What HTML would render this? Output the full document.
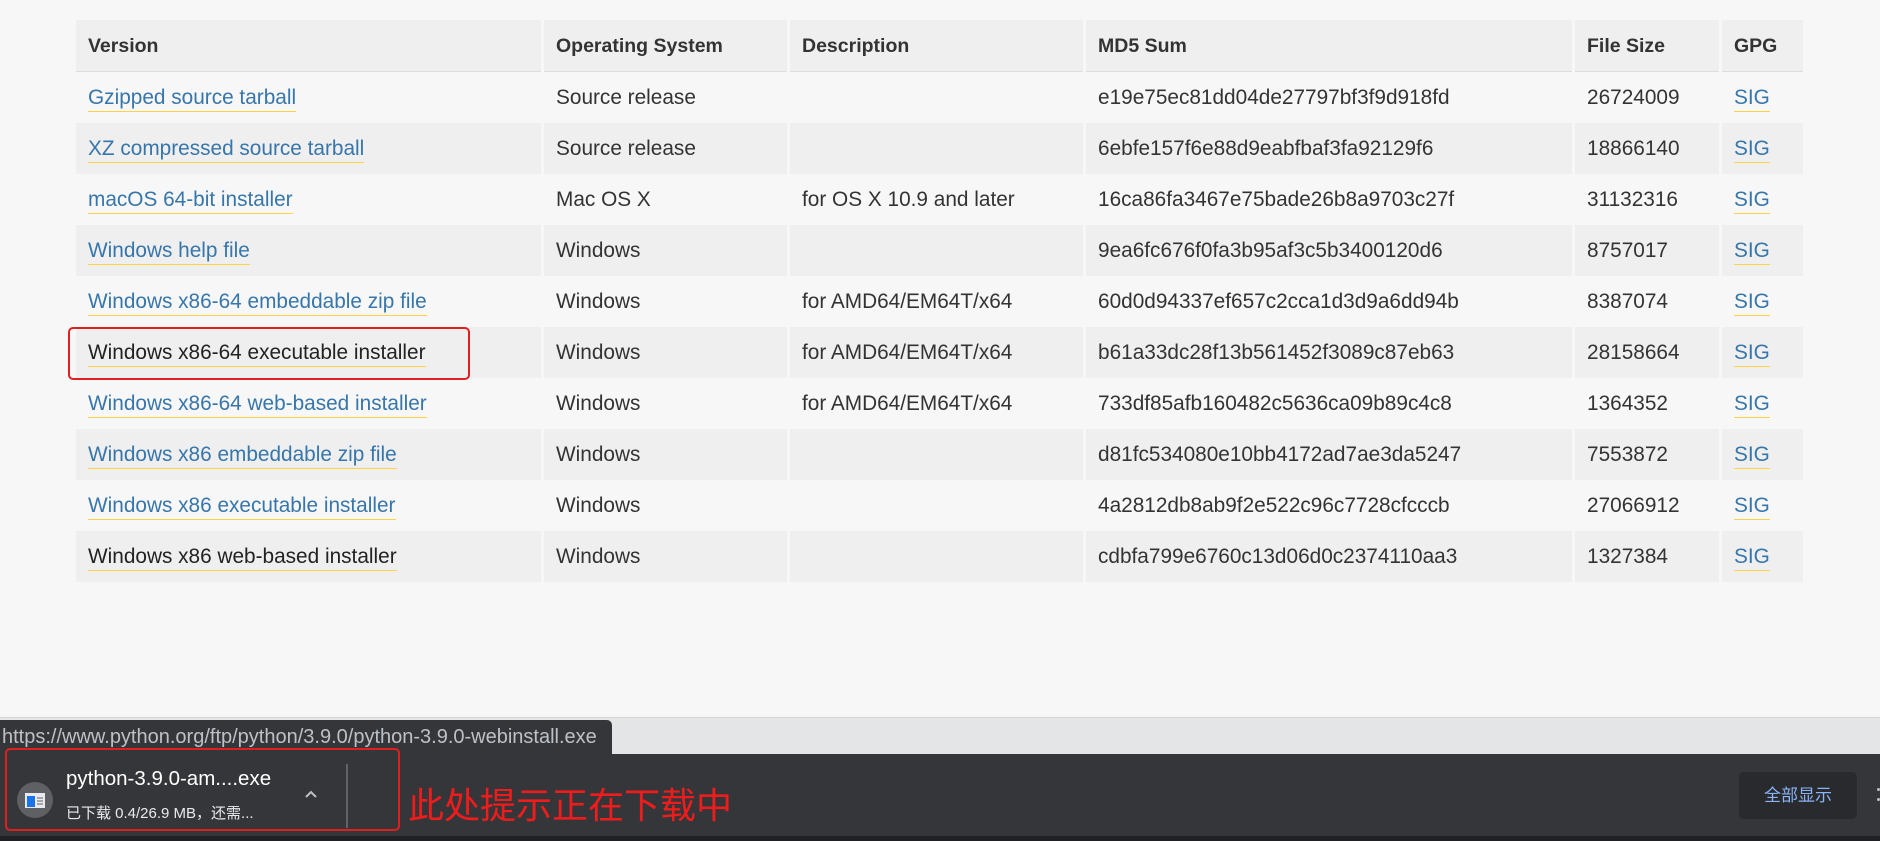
<!DOCTYPE html>
<html><head><meta charset="utf-8"><style>
html,body{margin:0;padding:0;width:1880px;height:841px;overflow:hidden;background:#f7f7f7;font-family:"Liberation Sans","Noto Sans CJK SC",sans-serif;}
.tbl{position:absolute;left:76px;top:20px;display:grid;grid-template-columns:465px 243px 293px 486px 144px 81px;column-gap:3px;}
.tbl div{height:51px;line-height:51px;padding-left:12px;font-size:20.8px;color:#333;white-space:nowrap;box-sizing:border-box;overflow:hidden;}
.tbl .h{height:52px;line-height:52px;font-weight:bold;color:#333;background:#efefef;border-bottom:1px solid #ddd;font-size:19.5px;}
.tbl .o{background:#f7f7f7}
.tbl .e{background:#efefef}
a{color:#3776ab;text-decoration:none;border-bottom:1px solid #ffd343;padding-bottom:2px;}
a.k{color:#222}
#hl{position:absolute;left:68px;top:327px;width:402px;height:53px;border:2px solid #e02020;border-radius:5px;box-sizing:border-box;}
#gray{position:absolute;left:0;top:717px;width:1880px;height:37px;background:#e4e5e7;border-top:1px solid #d5d5d5;}
#tab{position:absolute;left:0;top:720px;width:612px;height:34px;background:#35363a;border-radius:0 5px 0 0;color:#bdc1c6;font-size:20px;line-height:34px;padding-left:2px;box-sizing:border-box;white-space:nowrap;}
#bar{position:absolute;left:0;top:754px;width:1880px;height:82px;background:#35363a;}
#strip{position:absolute;left:0;top:836px;width:1880px;height:5px;background:#202124;}
#box{position:absolute;left:5px;top:748px;width:395px;height:83px;border:2px solid #e02020;border-radius:5px;box-sizing:border-box;}
#ic{position:absolute;left:17px;top:782px;width:36px;height:36px;border-radius:50%;background:#5f6064;}
#fn{position:absolute;left:66px;top:767px;color:#fff;font-size:20.5px;}
#sub{position:absolute;left:66px;top:802px;color:#e8eaed;font-size:15px;}
#sep{position:absolute;left:346px;top:764px;width:2px;height:64px;background:#5f6368;}
#red{position:absolute;left:408px;top:781px;color:#f01c1c;font-size:36px;font-family:"Noto Sans CJK SC",sans-serif;line-height:45px;}
#btn{position:absolute;left:1739px;top:772px;width:118px;height:47px;background:#292a2d;border-radius:5px;color:#8ab4f8;font-size:17px;line-height:47px;text-align:center;}
</style></head><body>
<div class="tbl">
<div class="h">Version</div><div class="h">Operating System</div><div class="h">Description</div><div class="h">MD5 Sum</div><div class="h">File Size</div><div class="h">GPG</div>
<div class="o"><a>Gzipped source tarball</a></div><div class="o">Source release</div><div class="o"></div><div class="o">e19e75ec81dd04de27797bf3f9d918fd</div><div class="o">26724009</div><div class="o"><a>SIG</a></div>
<div class="e"><a>XZ compressed source tarball</a></div><div class="e">Source release</div><div class="e"></div><div class="e">6ebfe157f6e88d9eabfbaf3fa92129f6</div><div class="e">18866140</div><div class="e"><a>SIG</a></div>
<div class="o"><a>macOS 64-bit installer</a></div><div class="o">Mac OS X</div><div class="o">for OS X 10.9 and later</div><div class="o">16ca86fa3467e75bade26b8a9703c27f</div><div class="o">31132316</div><div class="o"><a>SIG</a></div>
<div class="e"><a>Windows help file</a></div><div class="e">Windows</div><div class="e"></div><div class="e">9ea6fc676f0fa3b95af3c5b3400120d6</div><div class="e">8757017</div><div class="e"><a>SIG</a></div>
<div class="o"><a>Windows x86-64 embeddable zip file</a></div><div class="o">Windows</div><div class="o">for AMD64/EM64T/x64</div><div class="o">60d0d94337ef657c2cca1d3d9a6dd94b</div><div class="o">8387074</div><div class="o"><a>SIG</a></div>
<div class="e"><a class="k">Windows x86-64 executable installer</a></div><div class="e">Windows</div><div class="e">for AMD64/EM64T/x64</div><div class="e">b61a33dc28f13b561452f3089c87eb63</div><div class="e">28158664</div><div class="e"><a>SIG</a></div>
<div class="o"><a>Windows x86-64 web-based installer</a></div><div class="o">Windows</div><div class="o">for AMD64/EM64T/x64</div><div class="o">733df85afb160482c5636ca09b89c4c8</div><div class="o">1364352</div><div class="o"><a>SIG</a></div>
<div class="e"><a>Windows x86 embeddable zip file</a></div><div class="e">Windows</div><div class="e"></div><div class="e">d81fc534080e10bb4172ad7ae3da5247</div><div class="e">7553872</div><div class="e"><a>SIG</a></div>
<div class="o"><a>Windows x86 executable installer</a></div><div class="o">Windows</div><div class="o"></div><div class="o">4a2812db8ab9f2e522c96c7728cfcccb</div><div class="o">27066912</div><div class="o"><a>SIG</a></div>
<div class="e"><a class="k">Windows x86 web-based installer</a></div><div class="e">Windows</div><div class="e"></div><div class="e">cdbfa799e6760c13d06d0c2374110aa3</div><div class="e">1327384</div><div class="e"><a>SIG</a></div>
</div>
<div id="hl"></div>
<div id="gray"></div>
<div id="tab">https://www.python.org/ftp/python/3.9.0/python-3.9.0-webinstall.exe</div>
<div id="bar"></div>
<div id="strip"></div>
<div id="ic"><svg width="36" height="36"><rect x="8" y="11" width="20" height="15" fill="#e8eaed"/><rect x="10" y="14" width="8" height="11" fill="#1a73e8"/><line x1="20" y1="16" x2="26" y2="16" stroke="#5f6368"/><line x1="20" y1="19" x2="26" y2="19" stroke="#5f6368"/><line x1="20" y1="22" x2="26" y2="22" stroke="#5f6368"/></svg></div>
<div id="fn">python-3.9.0-am....exe</div>
<div id="sub">已下载 0.4/26.9 MB，还需...</div>
<svg style="position:absolute;left:303px;top:788px" width="16" height="12"><polyline points="3,9 8,4 13,9" fill="none" stroke="#bdc1c6" stroke-width="2"/></svg>
<div id="sep"></div>
<div id="box"></div>
<div id="red">此处提示正在下载中</div>
<div id="btn">全部显示</div>
<div style="position:absolute;left:1877px;top:788px;width:3px;height:3px;background:#bdc1c6;border-radius:50%"></div>
<div style="position:absolute;left:1877px;top:798px;width:3px;height:3px;background:#bdc1c6;border-radius:50%"></div>
</body></html>
